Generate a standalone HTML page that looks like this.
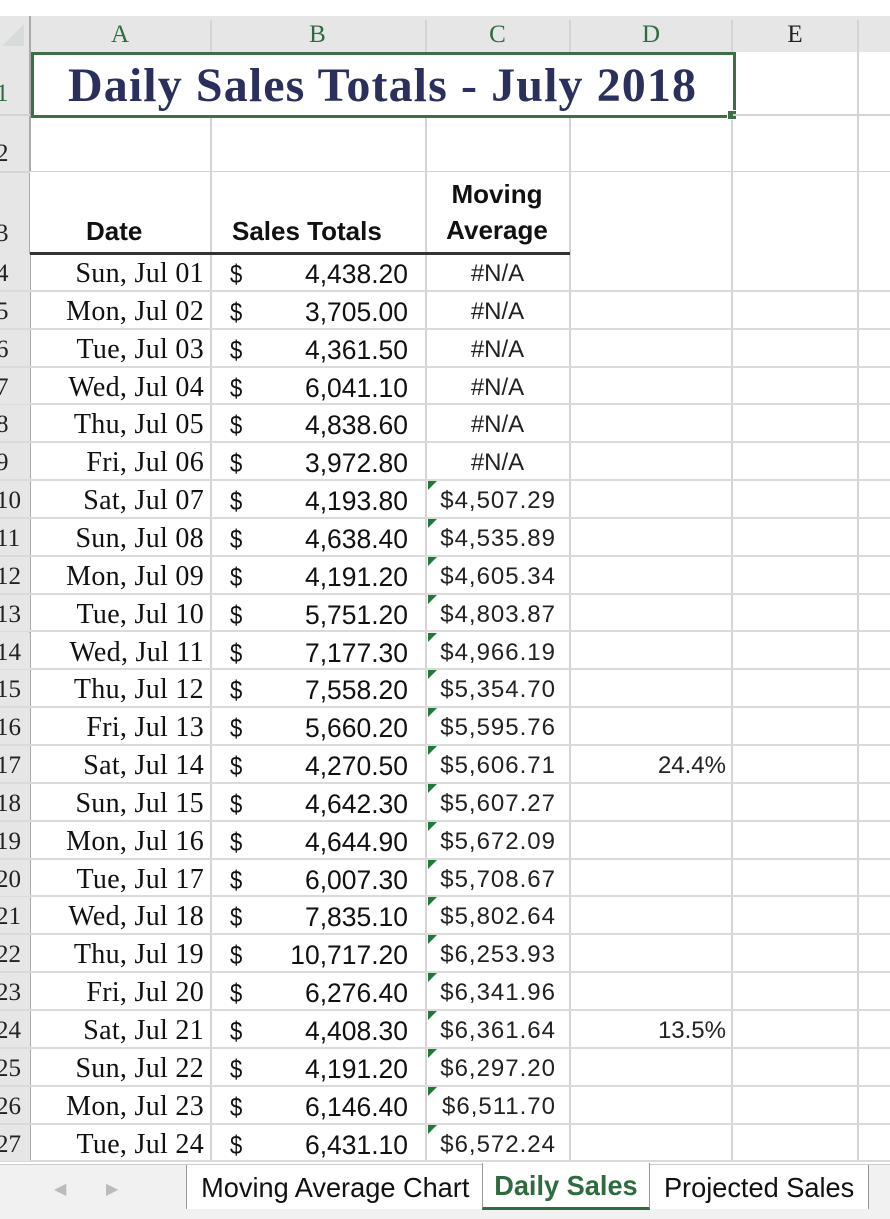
<!DOCTYPE html><html><head><style>
body{margin:0;width:890px;height:1218px;background:#fff;overflow:hidden;position:relative;font-family:"Liberation Serif",serif}
.g{position:absolute;background:#d4d4d4}
.hdr{position:absolute;top:16px;height:36px;background:#e6e6e6;left:0;width:890px}
.ch{position:absolute;top:16px;height:36px;line-height:38px;text-align:center;font-size:25px;color:#2e6b3e;font-family:"Liberation Serif",serif}
.r{position:absolute;left:0;width:890px;height:37.85px;border-bottom:2px solid #dadada;box-sizing:border-box}
.r>div{position:absolute;top:0;height:36px;line-height:40px;white-space:nowrap}
.n{left:0;width:30px;font-size:25px;color:#222;text-indent:-4px;background:#e6e6e6}
.a{left:20px;width:184px;text-align:right;font-size:28px;color:#111;letter-spacing:0.3px}
.d{left:230px;font-size:26px;font-family:"Liberation Sans",sans-serif;color:#111;transform:scaleX(.85);transform-origin:left}
.b{left:200px;width:208px;text-align:right;font-size:27px;font-family:"Liberation Sans",sans-serif;color:#111;transform:scaleX(.98);transform-origin:right}
.c{left:425px;width:131px;text-align:right;font-size:24px;font-family:"Liberation Sans",sans-serif;color:#222;letter-spacing:1px}
.c.na{text-align:center;width:145px;letter-spacing:0}
.t{position:absolute;left:428px;width:0;height:0;border-top:9px solid #1f7a3a;border-right:9px solid transparent}
.e{left:570px;width:156px;text-align:right;font-size:24px;font-family:"Liberation Sans",sans-serif;color:#222}
</style></head><body>
<div class="hdr"></div>
<div class="g" style="left:0;top:52px;width:30px;height:1110px;background:#e6e6e6"></div>
<svg style="position:absolute;left:0;top:22px" width="26" height="26"><polygon points="24,2 24,24 2,24" fill="#d8dcd8"/></svg>
<div class="ch" style="left:30px;width:180px">A</div>
<div class="ch" style="left:210px;width:215px">B</div>
<div class="ch" style="left:425px;width:145px">C</div>
<div class="ch" style="left:570px;width:162px">D</div>
<div class="ch" style="left:732px;width:126px;color:#222">E</div>
<div class="g" style="left:210px;top:20px;width:2px;height:1142px"></div>
<div class="g" style="left:425px;top:20px;width:2px;height:1142px"></div>
<div class="g" style="left:569px;top:20px;width:2px;height:1142px"></div>
<div class="g" style="left:731px;top:20px;width:2px;height:1142px"></div>
<div class="g" style="left:857px;top:20px;width:2px;height:1142px"></div>
<div class="g" style="left:29px;top:16px;width:2px;height:1146px;background:#aaa"></div>
<div style="position:absolute;left:0;top:52px;width:30px;height:64px;line-height:84px;font-size:25px;color:#2e6b3e;text-indent:-4px">1</div>
<div style="position:absolute;left:31px;top:52px;width:699px;height:60px;border:3px solid #3e6e47;background:#fff;box-sizing:content-box"></div>
<div style="position:absolute;left:727px;top:110px;width:8px;height:8px;background:#3e6e47;border:1px solid #fff"></div>
<div style="position:absolute;left:68px;top:54px;font-size:48px;font-weight:bold;color:#2a2f5c;line-height:64px;font-family:'Liberation Serif',serif;letter-spacing:1.1px;white-space:nowrap">Daily Sales Totals - July 2018</div>
<div class="g" style="left:0;top:114px;width:30px;height:2px"></div>
<div style="position:absolute;left:0;top:116px;width:30px;height:56px;line-height:76px;font-size:25px;color:#222;text-indent:-4px">2</div>
<div class="g" style="left:0;top:171px;width:890px;height:2px"></div>
<div class="g" style="left:733px;top:114px;width:157px;height:2px"></div>
<div style="position:absolute;left:0;top:172px;width:30px;height:82px;line-height:124px;font-size:25px;color:#222;text-indent:-4px">3</div>
<div style="position:absolute;left:30px;top:172px;width:890px;height:82px;background:#fff"></div>
<div style="position:absolute;left:86px;top:216px;font-size:26px;font-weight:bold;font-family:'Liberation Sans',sans-serif;color:#111">Date</div>
<div style="position:absolute;left:232px;top:216px;font-size:26px;font-weight:bold;font-family:'Liberation Sans',sans-serif;color:#111">Sales Totals</div>
<div style="position:absolute;left:427px;top:176px;width:140px;text-align:center;font-size:26px;font-weight:bold;font-family:'Liberation Sans',sans-serif;color:#111;line-height:36px">Moving<br>Average</div>
<div class="g" style="left:210px;top:172px;width:2px;height:82px"></div>
<div class="g" style="left:425px;top:172px;width:2px;height:82px"></div>
<div class="g" style="left:569px;top:172px;width:2px;height:82px"></div>
<div class="g" style="left:731px;top:172px;width:2px;height:82px"></div>
<div class="g" style="left:857px;top:172px;width:2px;height:82px"></div>
<div style="position:absolute;left:30px;top:252px;width:540px;height:3px;background:#333"></div>
<div style="position:absolute;left:0;top:254px;width:890px">
<div class="r" style="top:0px"><div class="n">4</div><div class="a">Sun, Jul 01</div><div class="d">$</div><div class="b">4,438.20</div><div class="c na">#N/A</div></div>
<div class="r" style="top:37.85px"><div class="n">5</div><div class="a">Mon, Jul 02</div><div class="d">$</div><div class="b">3,705.00</div><div class="c na">#N/A</div></div>
<div class="r" style="top:75.7px"><div class="n">6</div><div class="a">Tue, Jul 03</div><div class="d">$</div><div class="b">4,361.50</div><div class="c na">#N/A</div></div>
<div class="r" style="top:113.55px"><div class="n">7</div><div class="a">Wed, Jul 04</div><div class="d">$</div><div class="b">6,041.10</div><div class="c na">#N/A</div></div>
<div class="r" style="top:151.4px"><div class="n">8</div><div class="a">Thu, Jul 05</div><div class="d">$</div><div class="b">4,838.60</div><div class="c na">#N/A</div></div>
<div class="r" style="top:189.25px"><div class="n">9</div><div class="a">Fri, Jul 06</div><div class="d">$</div><div class="b">3,972.80</div><div class="c na">#N/A</div></div>
<div class="r" style="top:227.1px"><div class="n">10</div><div class="a">Sat, Jul 07</div><div class="d">$</div><div class="b">4,193.80</div><div class="c">$4,507.29</div><span class="t"></span></div>
<div class="r" style="top:264.95px"><div class="n">11</div><div class="a">Sun, Jul 08</div><div class="d">$</div><div class="b">4,638.40</div><div class="c">$4,535.89</div><span class="t"></span></div>
<div class="r" style="top:302.8px"><div class="n">12</div><div class="a">Mon, Jul 09</div><div class="d">$</div><div class="b">4,191.20</div><div class="c">$4,605.34</div><span class="t"></span></div>
<div class="r" style="top:340.65px"><div class="n">13</div><div class="a">Tue, Jul 10</div><div class="d">$</div><div class="b">5,751.20</div><div class="c">$4,803.87</div><span class="t"></span></div>
<div class="r" style="top:378.5px"><div class="n">14</div><div class="a">Wed, Jul 11</div><div class="d">$</div><div class="b">7,177.30</div><div class="c">$4,966.19</div><span class="t"></span></div>
<div class="r" style="top:416.35px"><div class="n">15</div><div class="a">Thu, Jul 12</div><div class="d">$</div><div class="b">7,558.20</div><div class="c">$5,354.70</div><span class="t"></span></div>
<div class="r" style="top:454.2px"><div class="n">16</div><div class="a">Fri, Jul 13</div><div class="d">$</div><div class="b">5,660.20</div><div class="c">$5,595.76</div><span class="t"></span></div>
<div class="r" style="top:492.05px"><div class="n">17</div><div class="a">Sat, Jul 14</div><div class="d">$</div><div class="b">4,270.50</div><div class="c">$5,606.71</div><span class="t"></span><div class="e">24.4%</div></div>
<div class="r" style="top:529.9px"><div class="n">18</div><div class="a">Sun, Jul 15</div><div class="d">$</div><div class="b">4,642.30</div><div class="c">$5,607.27</div><span class="t"></span></div>
<div class="r" style="top:567.75px"><div class="n">19</div><div class="a">Mon, Jul 16</div><div class="d">$</div><div class="b">4,644.90</div><div class="c">$5,672.09</div><span class="t"></span></div>
<div class="r" style="top:605.6px"><div class="n">20</div><div class="a">Tue, Jul 17</div><div class="d">$</div><div class="b">6,007.30</div><div class="c">$5,708.67</div><span class="t"></span></div>
<div class="r" style="top:643.45px"><div class="n">21</div><div class="a">Wed, Jul 18</div><div class="d">$</div><div class="b">7,835.10</div><div class="c">$5,802.64</div><span class="t"></span></div>
<div class="r" style="top:681.3px"><div class="n">22</div><div class="a">Thu, Jul 19</div><div class="d">$</div><div class="b">10,717.20</div><div class="c">$6,253.93</div><span class="t"></span></div>
<div class="r" style="top:719.15px"><div class="n">23</div><div class="a">Fri, Jul 20</div><div class="d">$</div><div class="b">6,276.40</div><div class="c">$6,341.96</div><span class="t"></span></div>
<div class="r" style="top:757px"><div class="n">24</div><div class="a">Sat, Jul 21</div><div class="d">$</div><div class="b">4,408.30</div><div class="c">$6,361.64</div><span class="t"></span><div class="e">13.5%</div></div>
<div class="r" style="top:794.85px"><div class="n">25</div><div class="a">Sun, Jul 22</div><div class="d">$</div><div class="b">4,191.20</div><div class="c">$6,297.20</div><span class="t"></span></div>
<div class="r" style="top:832.7px"><div class="n">26</div><div class="a">Mon, Jul 23</div><div class="d">$</div><div class="b">6,146.40</div><div class="c">$6,511.70</div><span class="t"></span></div>
<div class="r" style="top:870.55px"><div class="n">27</div><div class="a">Tue, Jul 24</div><div class="d">$</div><div class="b">6,431.10</div><div class="c">$6,572.24</div><span class="t"></span></div>
</div>
<div style="position:absolute;left:0;top:1164px;width:890px;height:54px;background:#f1f1f1;border-top:1px solid #ccc;font-family:'Liberation Sans',sans-serif;font-size:28px">
<div style="position:absolute;left:54px;top:14px;color:#bbb;font-size:16px">&#9664;</div>
<div style="position:absolute;left:106px;top:14px;color:#bbb;font-size:16px">&#9654;</div>
<div style="position:absolute;left:186px;top:0;width:296px;height:44px;background:#fff;border-left:1px solid #999;text-align:center;line-height:46px;color:#111;white-space:nowrap"><span style="display:inline-block;transform:scaleX(.97)">Moving Average Chart</span></div>
<div style="position:absolute;left:482px;top:-2px;width:166px;height:44px;background:#fff;border-left:1px solid #999;border-right:1px solid #999;border-bottom:3px solid #2e6b3e;text-align:center;line-height:46px;color:#2e6b3e;font-weight:bold;white-space:nowrap"><span style="display:inline-block;transform:scaleX(.97)">Daily Sales</span></div>
<div style="position:absolute;left:650px;top:0;width:218px;height:44px;background:#fff;border-right:1px solid #999;text-align:center;line-height:46px;color:#111;white-space:nowrap"><span style="display:inline-block;transform:scaleX(.97)">Projected Sales</span></div>
</div>
</body></html>
